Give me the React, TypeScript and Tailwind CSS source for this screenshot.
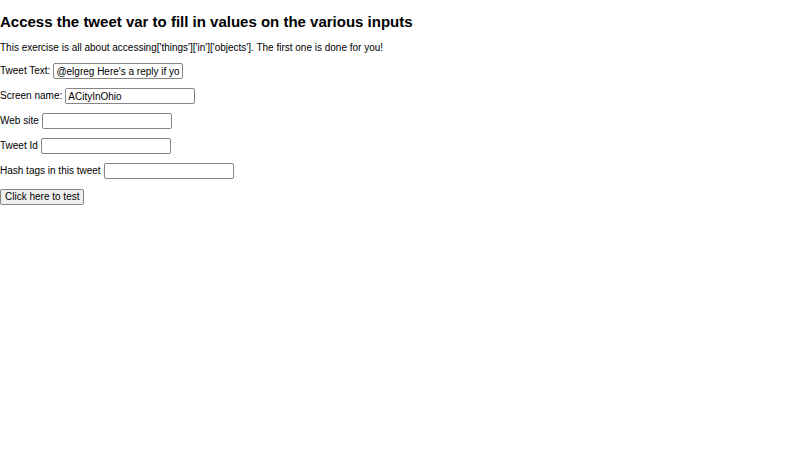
import { useState } from 'react';

const fields = [
  { label: 'Tweet Text:', value: "@elgreg Here's a reply if you need it" },
  { label: 'Screen name:', value: 'ACityInOhio' },
  { label: 'Web site', value: '' },
  { label: 'Tweet Id', value: '' },
  { label: 'Hash tags in this tweet', value: '' },
];

function Field({ label, initial }: { label: string; initial: string }) {
  const [value, setValue] = useState(initial);
  return (
    <div className="flex h-[16px] items-center">
      <label className="mr-[3px] leading-[12px]">{label}</label>
      <input
        type="text"
        value={value}
        onChange={(e) => setValue(e.target.value)}
        className="h-[16px] w-[130px] rounded-[2px] border border-[#858585] bg-white px-[2px] text-[10px] leading-[12px] text-black outline-none"
      />
    </div>
  );
}

export default function App() {
  return (
    <div className="min-h-[450px] w-[800px] bg-white pt-[13px] font-['Liberation_Sans',Arial,sans-serif] text-[10px] text-black">
      <h3 className="text-[15px] font-bold leading-[18px]">
        Access the tweet var to fill in values on the various inputs
      </h3>
      <p className="mt-[11px] leading-[12px]">
        This exercise is all about accessing['things']['in']['objects']. The first one is done for you!
      </p>
      <div className="mt-[9px] flex flex-col gap-[9px]">
        {fields.map((f) => (
          <Field key={f.label} label={f.label} initial={f.value} />
        ))}
        <div className="mt-[1px] flex">
          <button className="h-[16px] rounded-[2px] border border-[#858585] bg-[#efefef] px-[4px] text-[10px] leading-[12px] text-black">
            Click here to test
          </button>
        </div>
      </div>
    </div>
  );
}
